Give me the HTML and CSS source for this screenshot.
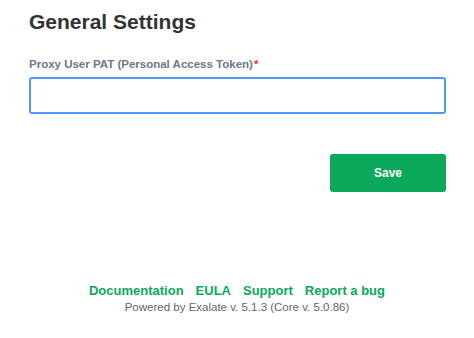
FILE: index.html
```html
<!DOCTYPE html>
<html>
<head>
<meta charset="utf-8">
<link rel="stylesheet" href="styles.css">
</head>
<body>
<div class="page">
  <h1 class="title">General Settings</h1>
  <label class="field-label" for="pat">Proxy User PAT (Personal Access Token)<span class="req">*</span></label>
  <input class="field-input" id="pat" type="text">
  <div class="actions">
    <button class="btn-save" type="button">Save</button>
  </div>
  <footer class="footer">
    <nav class="links">
      <a href="#">Documentation</a>
      <a href="#">EULA</a>
      <a href="#">Support</a>
      <a href="#">Report a bug</a>
    </nav>
    <div class="powered">Powered by Exalate v. 5.1.3 (Core v. 5.0.86)</div>
  </footer>
</div>
</body>
</html>
```

FILE: styles.css
```css
html, body {
  margin: 0;
  padding: 0;
  background: #ffffff;
  font-family: "Liberation Sans", Arial, sans-serif;
}

.page {
  padding: 10px 28px 0 29px;
  display: flex;
  flex-direction: column;
}

.title {
  margin: 0;
  font-size: 21px;
  line-height: 24px;
  font-weight: bold;
  color: #333333;
}

.field-label {
  margin-top: 23px;
  font-size: 11.5px;
  line-height: 14px;
  font-weight: bold;
  color: #6b778c;
}

.req {
  color: #de350b;
  margin-left: 1px;
}

.field-input {
  margin-top: 6px;
  box-sizing: border-box;
  width: 100%;
  height: 37px;
  border: 2px solid #4c9aff;
  border-radius: 3px;
  outline: none;
  padding: 0 8px;
  font-family: inherit;
}

.actions {
  margin-top: 40px;
  display: flex;
  justify-content: flex-end;
}

.btn-save {
  width: 116px;
  height: 38px;
  border: none;
  border-radius: 3px;
  background: #0aa85a;
  color: #ffffff;
  font-family: inherit;
  font-size: 12px;
  font-weight: bold;
  cursor: pointer;
}

.footer {
  margin: 91px -28px 0 -29px;
  display: flex;
  flex-direction: column;
  align-items: center;
}

.links {
  display: flex;
  gap: 12px;
  font-size: 13px;
  line-height: 15px;
  font-weight: bold;
}

.links a {
  color: #0aa85a;
  text-decoration: none;
}

.powered {
  margin-top: 2px;
  font-size: 11.5px;
  line-height: 14px;
  color: #666666;
}
```
